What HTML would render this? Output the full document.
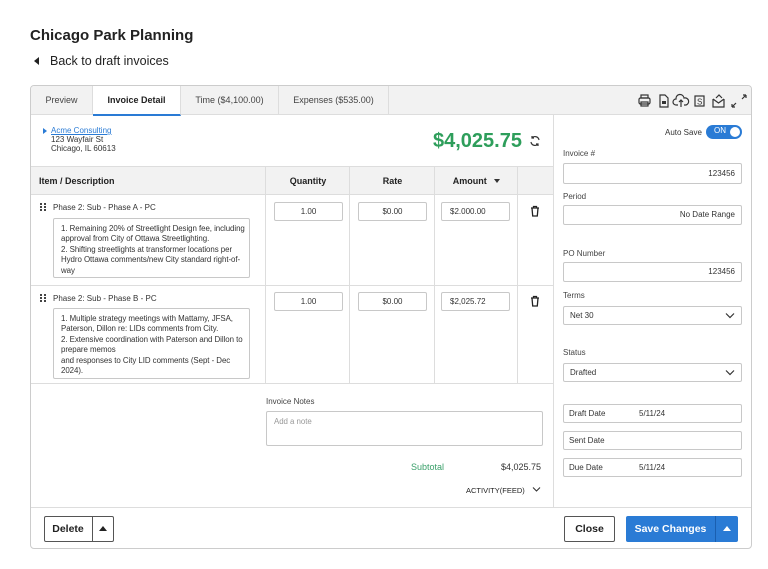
<!DOCTYPE html>
<html><head><meta charset="utf-8"><style>
*{box-sizing:border-box;margin:0;padding:0}
body{width:768px;height:569px;background:#fff;font-family:"Liberation Sans",Arial,sans-serif;color:#222;position:relative;overflow:hidden}
.a{position:absolute}
.t8{font-size:8px}
.inp{position:absolute;border:1px solid #c8c8c8;background:#fff;border-radius:2px;font-size:8px;color:#333}
.lbl{position:absolute;font-size:8px;color:#444}
.vl{position:absolute;width:1px;background:#ddd}
.hl{position:absolute;height:1px;background:#ddd}
.ta{position:absolute;border:1px solid #c8c8c8;border-radius:2px;font-size:7.9px;line-height:10.4px;padding:5px 2px 4px 7px;color:#333;overflow:hidden;letter-spacing:-0.05px}
.grip{position:absolute;width:2px;height:2px;background:#444;box-shadow:4px 0 #444,0 3px #444,4px 3px #444,0 6px #444,4px 6px #444}
</style></head><body>
<div class="a" style="left:30px;top:27px;font-size:15px;font-weight:bold">Chicago Park Planning</div>
<div class="a" style="left:34px;top:57px;width:0;height:0;border-top:4px solid transparent;border-bottom:4px solid transparent;border-right:5px solid #222"></div>
<div class="a" style="left:50px;top:54px;font-size:12.5px">Back to draft invoices</div>

<div class="a" style="left:30px;top:85px;width:722px;height:464px;border:1px solid #ccc;border-radius:4px;overflow:hidden">
  <div class="a" style="left:0;top:0;width:720px;height:29px;background:#f2f2f2;border-bottom:1px solid #ddd"></div>
  <div class="a" style="left:0;top:0;width:62px;height:29px;font-size:9px;color:#444;text-align:center;line-height:29px;border-right:1px solid #ddd">Preview</div>
  <div class="a" style="left:62px;top:0;width:88px;height:30px;background:#fff;font-size:9px;font-weight:bold;text-align:center;line-height:29px;border-bottom:2px solid #2a7bd5;border-right:1px solid #ddd">Invoice Detail</div>
  <div class="a" style="left:150px;top:0;width:98px;height:29px;font-size:9px;color:#444;text-align:center;line-height:29px;border-right:1px solid #ddd">Time ($4,100.00)</div>
  <div class="a" style="left:248px;top:0;width:110px;height:29px;font-size:9px;color:#444;text-align:center;line-height:29px;border-right:1px solid #ddd">Expenses ($535.00)</div>
  <svg class="a" style="left:605px;top:7px" width="112" height="16" viewBox="0 0 112 16" fill="none" stroke="#333" stroke-width="1.2">
    <rect x="3" y="5" width="11" height="6" rx="1.5"/><rect x="5" y="2" width="7" height="3"/><rect x="5" y="9" width="7" height="4"/>
    <path d="M24 2h5l3 3v9h-8z"/><rect x="26" y="8" width="4" height="3" fill="#333" stroke="none"/>
    <path d="M42 12h-2a3 3 0 0 1 0-6a4 4 0 0 1 8-1a3 3 0 0 1 2 7h-2M45 14v-7M43 9l2-2l2 2"/>
    <rect x="59" y="3" width="9" height="10"/><text x="61" y="11.5" font-size="8" fill="#333" stroke="none" font-family="Liberation Sans">S</text>
    <path d="M77 6v8h11v-8M77 6l5.5 4l5.5-4M80 5l3-3l3 3"/>
    <path d="M96 14l4-4M96 14v-3M96 14h3M110 2l-4 4M110 2v3M110 2h-3"/>
  </svg>

  <div class="a" style="left:12px;top:42px;width:0;height:0;border-top:3px solid transparent;border-bottom:3px solid transparent;border-left:4px solid #2a7bd5"></div>
  <div class="a t8" style="left:20px;top:40px;color:#2a7bd5;text-decoration:underline">Acme Consulting</div>
  <div class="a t8" style="left:20px;top:49px;color:#333">123 Wayfair St</div>
  <div class="a t8" style="left:20px;top:58px;color:#333">Chicago, IL 60613</div>
  <div class="a" style="left:402px;top:44px;font-size:20px;font-weight:bold;color:#2e9e5b">$4,025.75</div>
  <svg class="a" style="left:498px;top:49px" width="12" height="12" viewBox="0 0 12 12" fill="none" stroke="#333" stroke-width="1.2"><path d="M10 5A4 4 0 0 0 3 3M2 7a4 4 0 0 0 7 2M3 1v2h2M9 11v-2h-2"/></svg>

  <div class="a" style="left:0;top:80px;width:522px;height:29px;background:#f2f2f2;border-top:1px solid #ddd;border-bottom:1px solid #ddd"></div>
  <div class="a" style="left:8px;top:90px;font-size:9px;font-weight:bold">Item / Description</div>
  <div class="a" style="left:235px;top:90px;width:84px;text-align:center;font-size:9px;font-weight:bold">Quantity</div>
  <div class="a" style="left:319px;top:90px;width:85px;text-align:center;font-size:9px;font-weight:bold">Rate</div>
  <div class="a" style="left:404px;top:90px;width:83px;text-align:center;font-size:9px;font-weight:bold">Amount <span style="display:inline-block;width:0;height:0;border-left:3px solid transparent;border-right:3px solid transparent;border-top:4px solid #333;margin-left:5px;vertical-align:1px"></span></div>
  <div class="vl" style="left:234px;top:80px;height:218px"></div>
  <div class="vl" style="left:318px;top:80px;height:218px"></div>
  <div class="vl" style="left:403px;top:80px;height:218px"></div>
  <div class="vl" style="left:486px;top:80px;height:218px"></div>
  <div class="hl" style="left:0;top:199px;width:522px"></div>
  <div class="hl" style="left:0;top:297px;width:522px"></div>

  <div class="grip" style="left:9px;top:117px"></div>
  <div class="a t8" style="left:22px;top:117px;color:#333">Phase 2: Sub - Phase A - PC</div>
  <div class="ta" style="left:22px;top:132px;width:197px;height:60px">1. Remaining 20% of Streetlight Design fee, including approval from City of Ottawa Streetlighting.<br>2. Shifting streetlights at transformer locations per Hydro Ottawa comments/new City standard right-of-way</div>
  <div class="inp" style="left:243px;top:116px;width:69px;height:19px;text-align:center;line-height:17px">1.00</div>
  <div class="inp" style="left:327px;top:116px;width:69px;height:19px;text-align:center;line-height:17px">$0.00</div>
  <div class="inp" style="left:410px;top:116px;width:69px;height:19px;padding-left:8px;line-height:17px">$2.000.00</div>

  <div class="grip" style="left:9px;top:208px"></div>
  <div class="a t8" style="left:22px;top:208px;color:#333">Phase 2: Sub - Phase B - PC</div>
  <div class="ta" style="left:22px;top:222px;width:197px;height:71px">1. Multiple strategy meetings with Mattamy, JFSA, Paterson, Dillon re: LIDs comments from City.<br>2. Extensive coordination with Paterson and Dillon to prepare memos<br>and responses to City LID comments (Sept - Dec 2024).</div>
  <div class="inp" style="left:243px;top:206px;width:69px;height:19px;text-align:center;line-height:17px">1.00</div>
  <div class="inp" style="left:327px;top:206px;width:69px;height:19px;text-align:center;line-height:17px">$0.00</div>
  <div class="inp" style="left:410px;top:206px;width:69px;height:19px;padding-left:8px;line-height:17px">$2,025.72</div>

  <svg class="a" style="left:498px;top:119px" width="12" height="12" viewBox="0 0 12 12" fill="none" stroke="#222" stroke-width="1.3"><path d="M2 3h8M4.5 3V1.5h3V3M3 3l.7 8h4.6L9 3"/></svg>
  <svg class="a" style="left:498px;top:209px" width="12" height="12" viewBox="0 0 12 12" fill="none" stroke="#222" stroke-width="1.3"><path d="M2 3h8M4.5 3V1.5h3V3M3 3l.7 8h4.6L9 3"/></svg>

  <div class="lbl" style="left:235px;top:311px">Invoice Notes</div>
  <div class="ta" style="left:235px;top:325px;width:277px;height:35px;color:#999;padding-top:5px">Add a note</div>
  <div class="a" style="left:380px;top:376px;font-size:9px;color:#3aa06a">Subtotal</div>
  <div class="a" style="left:470px;top:376px;font-size:9px;color:#333">$4,025.75</div>
  <div class="a" style="left:435px;top:400px;font-size:7.5px;color:#222">ACTIVITY(FEED)</div>
  <svg class="a" style="left:501px;top:400px" width="9" height="7" viewBox="0 0 9 7" fill="none" stroke="#333" stroke-width="1.1"><path d="M1 1.5l3.5 3.5l3.5-3.5"/></svg>

  <div class="vl" style="left:522px;top:29px;height:392px"></div>
  <div class="a t8" style="left:634px;top:42px;color:#333">Auto Save</div>
  <div class="a" style="left:675px;top:39px;width:36px;height:14px;border-radius:7px;background:#2a7bd5"></div>
  <div class="a" style="left:683px;top:40px;font-size:8px;color:#fff">ON</div>
  <div class="a" style="left:699px;top:41px;width:10px;height:10px;border-radius:5px;background:#fff"></div>
  <div class="lbl" style="left:532px;top:63px">Invoice #</div>
  <div class="inp" style="left:532px;top:77px;width:179px;height:21px;text-align:right;padding-right:6px;line-height:19px">123456</div>
  <div class="lbl" style="left:532px;top:106px">Period</div>
  <div class="inp" style="left:532px;top:119px;width:179px;height:20px;text-align:right;padding-right:6px;line-height:18px">No Date Range</div>
  <div class="lbl" style="left:532px;top:163px">PO Number</div>
  <div class="inp" style="left:532px;top:176px;width:179px;height:20px;text-align:right;padding-right:6px;line-height:18px">123456</div>
  <div class="lbl" style="left:532px;top:205px">Terms</div>
  <div class="inp" style="left:532px;top:220px;width:179px;height:19px;padding-left:6px;line-height:17px">Net 30</div>
  <div class="lbl" style="left:532px;top:262px">Status</div>
  <div class="inp" style="left:532px;top:277px;width:179px;height:19px;padding-left:6px;line-height:17px">Drafted</div>
  <svg class="a" style="left:694px;top:226px" width="10" height="7" viewBox="0 0 10 7" fill="none" stroke="#333" stroke-width="1.2"><path d="M1 1.5l4 4l4-4"/></svg>
  <svg class="a" style="left:694px;top:283px" width="10" height="7" viewBox="0 0 10 7" fill="none" stroke="#333" stroke-width="1.2"><path d="M1 1.5l4 4l4-4"/></svg>
  <div class="inp" style="left:532px;top:318px;width:179px;height:19px;padding-left:5px;line-height:17px">Draft Date<span style="position:absolute;left:75px">5/11/24</span></div>
  <div class="inp" style="left:532px;top:345px;width:179px;height:19px;padding-left:5px;line-height:17px">Sent Date</div>
  <div class="inp" style="left:532px;top:372px;width:179px;height:19px;padding-left:5px;line-height:17px">Due Date<span style="position:absolute;left:75px">5/11/24</span></div>

  <div class="hl" style="left:0;top:421px;width:720px;background:#ddd"></div>
  <div class="a" style="left:13px;top:430px;width:70px;height:26px;border:1px solid #555;border-radius:2px"></div>
  <div class="vl" style="left:61px;top:430px;height:26px;background:#555"></div>
  <div class="a" style="left:13px;top:437px;width:48px;text-align:center;font-size:10.5px;font-weight:bold">Delete</div>
  <div class="a" style="left:68px;top:440px;width:0;height:0;border-left:4px solid transparent;border-right:4px solid transparent;border-bottom:5px solid #222"></div>
  <div class="a" style="left:533px;top:430px;width:51px;height:26px;border:1px solid #555;border-radius:2px;text-align:center;line-height:24px;font-size:10.5px;font-weight:bold">Close</div>
  <div class="a" style="left:595px;top:430px;width:112px;height:26px;background:#2a7bd5;border-radius:2px"></div>
  <div class="vl" style="left:684px;top:430px;height:26px;background:#1a5fb0"></div>
  <div class="a" style="left:595px;top:437px;width:89px;text-align:center;font-size:10.5px;font-weight:bold;color:#fff">Save Changes</div>
  <div class="a" style="left:692px;top:440px;width:0;height:0;border-left:4px solid transparent;border-right:4px solid transparent;border-bottom:5px solid #fff"></div>
</div>
</body></html>
